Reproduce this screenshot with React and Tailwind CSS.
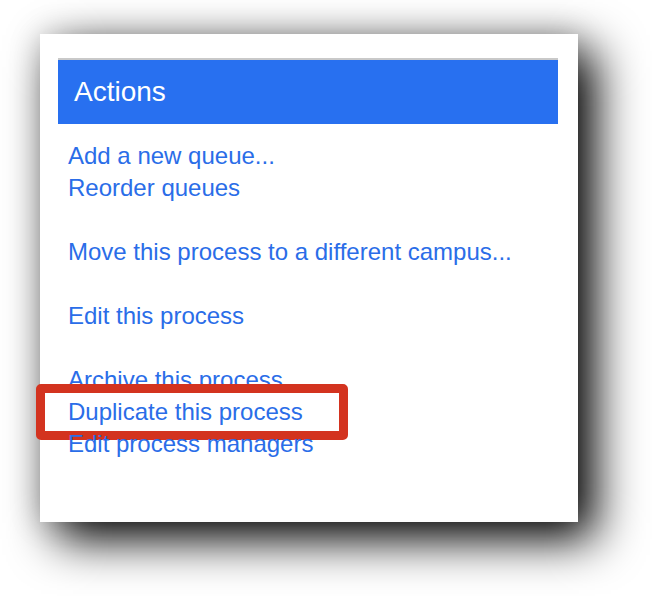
export default function App() {
  const groups = [
    ['Add a new queue...', 'Reorder queues'],
    ['Move this process to a different campus...'],
    ['Edit this process'],
    ['Archive this process', 'Duplicate this process', 'Edit process managers'],
  ];

  return (
    <div className="w-[652px] h-[596px] bg-white overflow-hidden font-['Liberation_Sans',Arial,sans-serif]">
      <div className="ml-[40px] mt-[34px] w-[538px] h-[488px] bg-white pl-[18px] pr-[20px] pt-[24px] shadow-[0_0_30px_rgba(0,0,0,0.18),17px_17px_45px_rgba(0,0,0,1)]">
        {/* Header */}
        <div className="h-[66px] bg-[#2870f0] border-t-2 border-[#c9c9c9] flex items-center px-[16px]">
          <h2 className="text-white text-[28px] leading-none">Actions</h2>
        </div>

        {/* Links */}
        <div className="pl-[10px] pt-[16px] text-[24px] leading-[32px] text-[#2a6de8]">
          {groups.map((links, i) => (
            <div key={i} className={i > 0 ? 'mt-[32px]' : ''}>
              {links.map((label) => (
                <div key={label} className="relative">
                  <a href="#" className="hover:underline">{label}</a>
                  {label === 'Duplicate this process' && (
                    <div className="absolute left-[-32px] top-[-12px] w-[312px] h-[56px] border-[9px] border-[#d3331f] rounded-[5px] pointer-events-none"></div>
                  )}
                </div>
              ))}
            </div>
          ))}
        </div>
      </div>
    </div>
  );
}
